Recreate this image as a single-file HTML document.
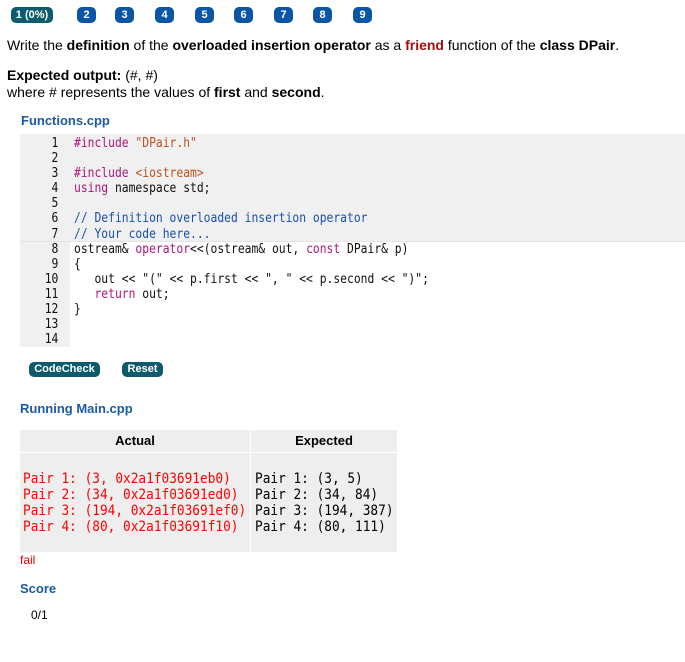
<!DOCTYPE html>
<html><head><style>
body{margin:0;width:685px;height:662px;background:#fff;font-family:"Liberation Sans",sans-serif;position:relative;overflow:hidden}
.a{position:absolute}
.b{position:absolute;top:7px;height:16px;border-radius:5px;background:#0a55a6;color:#fff;font-weight:bold;font-size:11px;line-height:16px;text-align:center;width:19px}
.t{font-size:14px;color:#000}
.code{font-family:"DejaVu Sans Mono",monospace;font-size:13px;line-height:15.1px;white-space:pre;transform:scaleX(0.872);transform-origin:0 0}
.out{font-family:"DejaVu Sans Mono",monospace;font-size:14px;line-height:16px;white-space:pre;transform:scaleX(0.913);transform-origin:0 0}
.kw{color:#b0157a}.str{color:#c0501f}.cm{color:#1a50b0}.inc{color:#b0157a}
.btn{position:absolute;top:362px;height:15px;border-radius:5px;background:#0c5a6c;color:#fff;font-weight:bold;font-size:11px;line-height:15px;text-align:center}
h4{margin:0;position:absolute;font-size:13px;color:#1a5aa6;font-weight:bold}
</style></head><body>
<div class="b" style="left:11px;width:42px;background:#0b5d6d">1 (0%)</div>
<div class="b" style="left:77px">2</div>
<div class="b" style="left:115px">3</div>
<div class="b" style="left:155px">4</div>
<div class="b" style="left:195px">5</div>
<div class="b" style="left:234px">6</div>
<div class="b" style="left:274px">7</div>
<div class="b" style="left:313px">8</div>
<div class="b" style="left:353px">9</div>

<div class="a t" style="left:7px;top:37px">Write the <b>definition</b> of the <b>overloaded insertion operator</b> as a <b style="color:#a01010">friend</b> function of the <b>class DPair</b>.</div>
<div class="a t" style="left:7px;top:67px"><b>Expected output:</b> (#, #)</div>
<div class="a t" style="left:7px;top:84px">where # represents the values of <b>first</b> and <b>second</b>.</div>

<h4 style="left:21px;top:113px">Functions.cpp</h4>
<div class="a" style="left:20px;top:134px;width:665px;height:213px;background:#f0f0f0"></div>
<div class="a" style="left:70px;top:241px;width:615px;height:106px;background:#fff"></div>
<div class="a" style="left:20px;top:241px;width:665px;height:1px;background:#e4e4e4"></div>
<div class="a code" style="left:20px;top:136px;width:44px;text-align:right;color:#111"> 1
 2
 3
 4
 5
 6
 7
 8
 9
10
11
12
13
14</div>
<div class="a code" style="left:74px;top:136px;color:#111"><span class="inc">#include</span> <span class="str">"DPair.h"</span>

<span class="inc">#include</span> <span class="str">&lt;iostream&gt;</span>
<span class="kw">using</span> namespace std;

<span class="cm">// Definition overloaded insertion operator</span>
<span class="cm">// Your code here...</span>
ostream&amp; <span class="kw">operator</span>&lt;&lt;(ostream&amp; out, <span class="kw">const</span> DPair&amp; p)
{
   out &lt;&lt; "(" &lt;&lt; p.first &lt;&lt; ", " &lt;&lt; p.second &lt;&lt; ")";
   <span class="kw">return</span> out;
}</div>

<div class="btn" style="left:29px;width:71px">CodeCheck</div>
<div class="btn" style="left:122px;width:41px">Reset</div>

<h4 style="left:20px;top:401px">Running Main.cpp</h4>
<div class="a" style="left:20px;top:430px;width:230px;height:22px;background:#eee;font-weight:bold;font-size:13px;text-align:center;line-height:22px">Actual</div>
<div class="a" style="left:251px;top:430px;width:146px;height:22px;background:#eee;font-weight:bold;font-size:13px;text-align:center;line-height:22px">Expected</div>
<div class="a" style="left:20px;top:453px;width:230px;height:99px;background:#eee"></div>
<div class="a" style="left:251px;top:453px;width:146px;height:99px;background:#eee"></div>
<div class="a out" style="left:23px;top:471px;color:#f00">Pair 1: (3, 0x2a1f03691eb0)
Pair 2: (34, 0x2a1f03691ed0)
Pair 3: (194, 0x2a1f03691ef0)
Pair 4: (80, 0x2a1f03691f10)</div>
<div class="a out" style="left:255px;top:471px;color:#000">Pair 1: (3, 5)
Pair 2: (34, 84)
Pair 3: (194, 387)
Pair 4: (80, 111)</div>
<div class="a" style="left:20px;top:553px;font-size:12px;color:#d00">fail</div>
<h4 style="left:20px;top:581px">Score</h4>
<div class="a" style="left:31px;top:608px;font-size:12px">0/1</div>
</body></html>
